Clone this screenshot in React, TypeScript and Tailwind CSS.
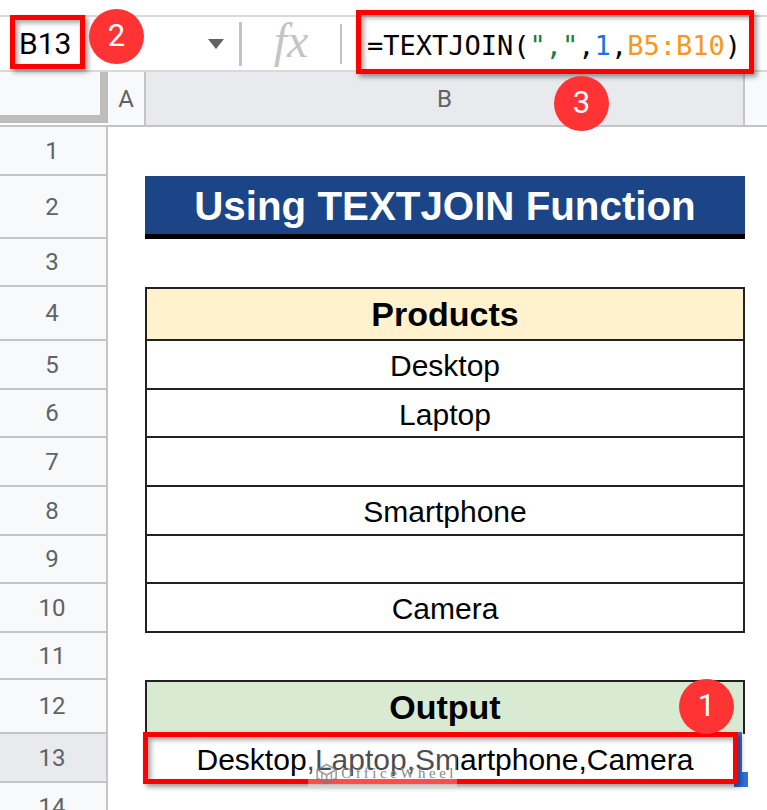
const body = 'text-[30px] pt-[3px] border-2 border-t-0 border-[#222]'

const rows = [
  { n: '1', h: 49 },
  { n: '2', h: 63, text: 'Using TEXTJOIN Function', cell: 'bg-[#1c4587] text-white font-bold text-[40.3px] pt-[5px] border-b-[5px] border-black' },
  { n: '3', h: 48 },
  { n: '4', h: 54, text: 'Products', cell: 'bg-[#fff2cc] font-bold text-[34px] pb-[1px] border-2 border-[#222]' },
  { n: '5', h: 49, text: 'Desktop', cell: body },
  { n: '6', h: 48, text: 'Laptop', cell: body },
  { n: '7', h: 49, text: '', cell: body },
  { n: '8', h: 49, text: 'Smartphone', cell: body },
  { n: '9', h: 48, text: '', cell: body },
  { n: '10', h: 49, text: 'Camera', cell: body },
  { n: '11', h: 47 },
  { n: '12', h: 54, text: 'Output', cell: 'bg-[#d9ead3] font-bold text-[34px] pb-[2px] border-2 border-b-0 border-[#222]' },
  { n: '13', h: 49, text: 'Desktop,Laptop,Smartphone,Camera', cell: 'text-[30px] pt-[2px]', selected: true },
  { n: '14', h: 49 },
]

function Badge({ n, className }: { n: string; className: string }) {
  return (
    <div className={`absolute w-[55px] h-[55px] rounded-full bg-[#ff3333] text-white flex items-center justify-center text-[31px] font-['Roboto',sans-serif] ${className}`}>
      {n}
    </div>
  )
}

function RedBox({ className }: { className: string }) {
  return <div className={`absolute border-[5px] border-[#ff0000] shadow-[3px_3px_5px_rgba(0,0,0,0.4),inset_3px_3px_5px_rgba(0,0,0,0.35)] ${className}`} />
}

export default function App() {
  return (
    <div className="relative w-[767px] h-[810px] overflow-hidden bg-white font-['Liberation_Sans',sans-serif] text-black">
      <div className="mt-[15px] h-[57px] flex items-center border-t-2 border-b-2 border-[#d9d9d9]">
        <div className="w-[77px] pl-[19px] text-[30px] font-['Roboto',sans-serif] leading-none">B13</div>
        <div className="w-[131px]" />
        <div className="w-0 h-0 border-l-[8px] border-r-[8px] border-t-[10px] border-l-transparent border-r-transparent border-t-[#5f6368]" />
        <div className="ml-[15px] w-[3px] h-[44px] bg-[#c4c4c4]" />
        <div className="w-[98px] pb-[5px] text-center text-[48px] leading-none italic text-[#c4c4c4] font-['Liberation_Serif',serif]">fx</div>
        <div className="w-[2px] h-[40px] bg-[#c4c4c4]" />
        <div className="ml-[25px] pt-[3px] whitespace-nowrap text-[27px] leading-none font-['DejaVu_Sans_Mono',monospace]">
          =TEXTJOIN(<span className="text-[#188038]">&quot;,&quot;</span>,<span className="text-[#1a73e8]">1</span>,<span className="text-[#f7981d]">B5:B10</span>)
        </div>
      </div>

      <div className="flex h-[55px] border-b-2 border-[#c4c4c4] text-[24px] font-['Roboto',sans-serif] text-[#5f6368]">
        <div className="w-[108px] bg-[#f8f9fa] border-r-[8px] border-b-[8px] border-[#bdbdbd] mb-[2px]" />
        <div className="w-[38px] bg-[#f8f9fa] border-r-2 border-[#c4c4c4] flex items-center justify-center">A</div>
        <div className="w-[599px] bg-[#e8eaed] border-r-2 border-[#c4c4c4] flex items-center justify-center">B</div>
        <div className="flex-1 bg-[#f8f9fa]" />
      </div>

      {rows.map((r) => (
        <div key={r.n} className="flex" style={{ height: r.h }}>
          <div className={`w-[108px] shrink-0 flex items-center justify-center pr-[2px] border-r-2 border-b-2 border-[#c4c4c4] text-[24px] font-['Roboto',sans-serif] text-[#5f6368] ${r.selected ? 'bg-[#e8eaed]' : 'bg-[#f8f9fa]'}`}>
            {r.n}
          </div>
          <div className="ml-[37px] w-[600px]">
            {r.cell && (
              <div className={`h-full flex items-center justify-center whitespace-nowrap leading-none ${r.cell}`}>
                {r.text}
              </div>
            )}
          </div>
        </div>
      ))}

      <RedBox className="left-[10px] top-[15px] w-[75px] h-[54px]" />
      <RedBox className="left-[356px] top-[10px] w-[398px] h-[64px]" />
      <div className="absolute left-[738px] top-[732px] w-[4px] h-[44px] bg-[#3f6fd0]" />
      <div className="absolute left-[734px] top-[772px] w-[14px] h-[15px] bg-[#2f6fde]" />
      <RedBox className="left-[143px] top-[732px] w-[595px] h-[52px]" />
      <Badge n="2" className="left-[89px] top-[9px]" />
      <Badge n="3" className="left-[554px] top-[76px]" />
      <Badge n="1" className="left-[679px] top-[679px]" />

      <div className="absolute left-[308px] top-[750px] w-[149px] h-[37px] bg-white/30 flex items-end">
        <svg width="26" height="26" viewBox="0 0 24 24" fill="none" stroke="#777" strokeWidth="1.5" className="ml-[6px] opacity-70">
          <path d="M12 3 3 8v8l9 5 9-5V8z" />
          <path d="M3 8l9 5 9-5M12 13v8M7.500 10.500v6M16.500 10.500v6" />
        </svg>
        <span className="ml-[2px] mb-[6px] text-[15px] leading-none tracking-[3.5px] text-[#888] font-['Liberation_Serif',serif]">OfficeWheel</span>
      </div>
    </div>
  )
}
